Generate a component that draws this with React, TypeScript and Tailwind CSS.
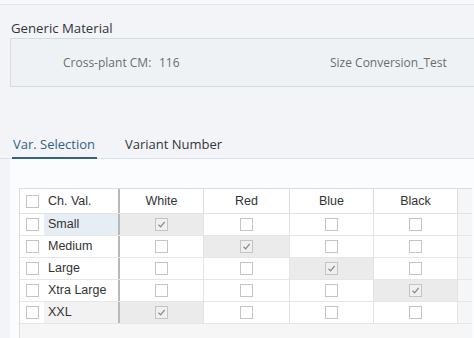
import React from "react";

const cols = ["White", "Red", "Blue", "Black"];
const rows = [
  { name: "Small", checked: 0, chBg: "bg-[#e6edf4]" },
  { name: "Medium", checked: 1, chBg: "bg-white" },
  { name: "Large", checked: 2, chBg: "bg-white" },
  { name: "Xtra Large", checked: 3, chBg: "bg-white" },
  { name: "XXL", checked: 0, chBg: "bg-[#f2f2f2]" },
];
const widths = ["w-[84px]", "w-[86px]", "w-[84px]", "w-[84px]"];

function Box({ checked }: { checked?: boolean }) {
  return (
    <div
      className={`w-[13px] h-[13px] border border-[#c4c4c4] flex items-center justify-center ${
        checked ? "bg-[#f0f0f0]" : "bg-white"
      }`}
    >
      {checked && (
        <svg width="9" height="9" viewBox="0 0 9 9">
          <path d="M1.5 4.8 L3.6 6.8 L7.6 2" fill="none" stroke="#8a8a8a" strokeWidth="1.2" />
        </svg>
      )}
    </div>
  );
}

export default function App() {
  return (
    <div className="w-[474px] h-[338px] overflow-hidden bg-[#f2f4f7] text-[#32363a] font-['Open_Sans','Noto_Sans',sans-serif]">
      <div className="h-[5px] bg-[#f7f8fa] border-b border-[#e3e7eb]" />
      <div className="pl-[11px] pt-[13px] text-[13.2px] leading-[20px]">Generic Material</div>
      <div className="ml-[10px] h-[49px] border border-r-0 border-[#d5dadf] bg-[#eff2f5] flex items-center text-[12px] text-[#6a6d70]">
        <span className="pl-[52px] w-[148px]">Cross-plant CM:</span>
        <span className="w-[171px]">116</span>
        <span>Size Conversion_Test</span>
      </div>
      <div className="mt-[47px] flex pl-[12px] border-b border-[#d9e1e9] text-[13px] leading-[20px] whitespace-nowrap">
        <div className="w-[85px] pl-[1px] pb-[3px] border-b-2 border-[#346187] text-[#346187] -mb-px">
          Var. Selection
        </div>
        <div className="ml-[28px] pb-[3px]">Variant Number</div>
      </div>
      <div className="ml-[10px] bg-[#fbfcfd] pt-[29px] pl-[9px] h-[200px] font-['Liberation_Sans',Arial,sans-serif]">
        <div className="w-[453px] h-[150px] bg-[#f6f6f6] border-l border-t border-[#dcdcdc] text-[12.5px] text-[#333]">
          <div className="flex h-[25px] border-b border-[#e2e2e2]">
            <div className="w-[24px] bg-white flex items-center justify-center">
              <Box />
            </div>
            <div className="w-[76px] bg-white border-r-2 border-[#b8b8b8] flex items-center pl-[4px]">Ch. Val.</div>
            {cols.map((c, i) => (
              <div
                key={c}
                className={`${widths[i]} bg-white border-r border-[#dcdcdc] flex items-center justify-center`}
              >
                {c}
              </div>
            ))}
            <div className="flex-1 bg-[#f6f6f6]" />
          </div>
          {rows.map((r) => (
            <div key={r.name} className="flex h-[22px] border-b border-[#e6e6e6]">
              <div className="w-[24px] bg-white flex items-center justify-center">
                <Box />
              </div>
              <div className={`w-[76px] ${r.chBg} border-r-2 border-[#b8b8b8] flex items-center pl-[4px]`}>
                {r.name}
              </div>
              {cols.map((c, i) => (
                <div
                  key={c}
                  className={`${widths[i]} ${
                    i === r.checked ? "bg-[#ebebeb]" : "bg-white"
                  } border-r border-[#e3e3e3] flex items-center justify-center`}
                >
                  <Box checked={i === r.checked} />
                </div>
              ))}
              <div className="flex-1 bg-[#f6f6f6]" />
            </div>
          ))}
        </div>
      </div>
    </div>
  );
}
